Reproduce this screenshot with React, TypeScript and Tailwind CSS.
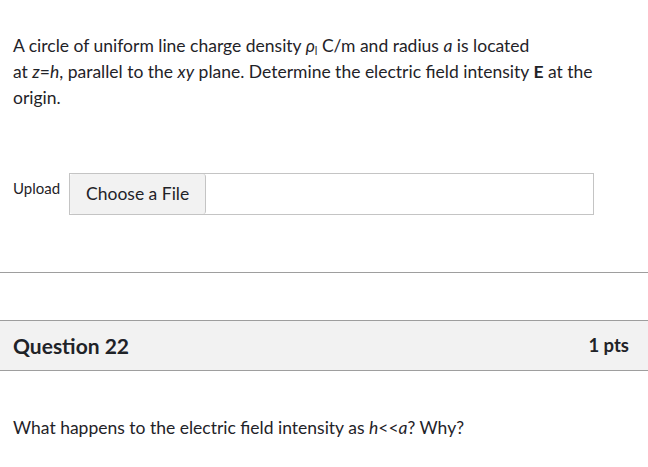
import React from "react";

export default function App() {
  return (
    <div className="w-[648px] h-[467px] bg-white text-[#1f2328] font-['Lato','Liberation_Sans',sans-serif] overflow-hidden">
      <div className="pl-[13px] pr-[40px] pt-[33px] text-[17.5px] leading-[26px]">
        <p>
          A circle of uniform line charge density <i>ρ</i>
          <sub className="text-[11px] leading-none">l</sub> C/m and radius <i>a</i> is located
          <br />
          at <i>z</i>=<i>h</i>, parallel to the <i>xy</i> plane. Determine the electric field intensity{" "}
          <b>E</b> at the origin.
        </p>
      </div>

      <div className="flex items-start pl-[13px] mt-[62px]">
        <span className="text-[15px] leading-[18px] mt-[6px] w-[56px]">Upload</span>
        <div className="flex w-[525px] h-[42px] border border-[#c4c4c4] bg-white">
          <button className="h-full px-[16px] bg-[#f2f2f2] border-r border-[#c4c4c4] rounded-[3px] text-[17.5px]">
            Choose a File
          </button>
          <div className="flex-1" />
        </div>
      </div>

      <div className="mt-[57px] border-t border-[#9e9e9e]" />

      <div className="mt-[47px] h-[51px] bg-[#f2f2f2] border-y border-[#9e9e9e] flex items-center justify-between pl-[13px] pr-[19px]">
        <h2 className="text-[21px] font-bold">Question 22</h2>
        <span className="text-[18.5px] font-bold">1 pts</span>
      </div>

      <p className="pl-[13px] mt-[44px] text-[17.5px] leading-[26px]">
        What happens to the electric field intensity as <i>h</i>&lt;&lt;<i>a</i>? Why?
      </p>
    </div>
  );
}
